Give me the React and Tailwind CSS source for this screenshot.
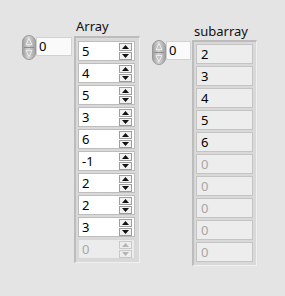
import React from "react";

function IndexSpinner() {
  return (
    <svg width="14" height="25" viewBox="0 0 14 25" className="block">
      <defs>
        <linearGradient id="spg" x1="0" y1="0" x2="1" y2="0">
          <stop offset="0" stopColor="#9c9c9c" />
          <stop offset="0.45" stopColor="#d6d6d6" />
          <stop offset="1" stopColor="#a2a2a2" />
        </linearGradient>
      </defs>
      <rect x="0.5" y="0.5" width="13" height="24" rx="6.5" fill="url(#spg)" stroke="#9a9a9a" />
      <line x1="2" y1="12.5" x2="12" y2="12.5" stroke="#8c8c8c" />
      <path d="M7 3.5 L10 9.5 H4 Z" fill="#c4c4c4" stroke="#f4f4f4" strokeWidth="0.8" />
      <path d="M7 21.5 L10 15.5 H4 Z" fill="#c4c4c4" stroke="#f4f4f4" strokeWidth="0.8" />
    </svg>
  );
}

function IndexBox({ w }) {
  return (
    <div
      className={`${w} h-[19px] bg-[#fafafa] border border-[#d2d2d2] text-[13px] leading-[17px] pl-[2px] text-black`}
    >
      0
    </div>
  );
}

function CellArrows({ disabled }) {
  const c = disabled ? "#b5b5b5" : "#111";
  const b = disabled ? "border-[#c9c9c9] bg-[#ededed]" : "border-[#9d9d9d] bg-[#f2f2f2]";
  return (
    <div className="flex flex-col gap-[1px] mr-[2px]">
      <div className={`w-[13px] h-[8px] border ${b} flex items-center justify-center`}>
        <svg width="7" height="4" viewBox="0 0 7 4">
          <path d="M3.5 0 L7 4 H0 Z" fill={c} />
        </svg>
      </div>
      <div className={`w-[13px] h-[8px] border ${b} flex items-center justify-center`}>
        <svg width="7" height="4" viewBox="0 0 7 4">
          <path d="M0 0 H7 L3.5 4 Z" fill={c} />
        </svg>
      </div>
    </div>
  );
}

function ArrayCell({ v, disabled }) {
  return (
    <div
      className={`h-[20px] flex items-center justify-between border ${
        disabled ? "bg-[#ececec] border-[#d6d6d6] text-[#a9a9a9]" : "bg-white border-[#bdbdbd] text-black"
      }`}
    >
      <span className="pl-[3px] text-[13px] leading-none">{v}</span>
      <CellArrows disabled={disabled} />
    </div>
  );
}

function SubCell({ v, disabled }) {
  return (
    <div
      className={`h-[20px] flex items-center border border-[#c4c4c4] bg-[#ededed] ${
        disabled ? "text-[#a7a7a7]" : "text-black"
      }`}
    >
      <span className="pl-[4px] text-[13px] leading-none">{v}</span>
    </div>
  );
}

export default function App() {
  const arr = ["5", "4", "5", "3", "6", "-1", "2", "2", "3"];
  const sub = ["2", "3", "4", "5", "6"];
  return (
    <div
      className="w-[285px] h-[296px] bg-[#e4e4e4] flex items-start"
      style={{ fontFamily: '"Noto Sans", "Open Sans", sans-serif' }}
    >
      {/* Array group */}
      <div className="flex items-start pl-[22px] pt-[18px]">
        <div className="mt-[17px] flex items-start">
          <IndexSpinner />
          <div className="mt-[2px]">
            <IndexBox w="w-[36px]" />
          </div>
        </div>
        <div className="ml-[2px] flex flex-col">
          <div className="h-[18px] pl-[2px] text-[13px] leading-[16px] text-[#111]">Array</div>
          <div className="w-[66px] bg-[#d9d9d9] border-t-[2px] border-l-[2px] border-[#bcbcbc] border-r border-b border-r-[#f0f0f0] border-b-[#f0f0f0] pt-[3px] pb-[3px] pl-[2px] pr-[4px] flex flex-col gap-[2px]">
            {arr.map((v, i) => (
              <ArrayCell key={i} v={v} />
            ))}
            <ArrayCell v="0" disabled />
          </div>
        </div>
      </div>

      {/* Subarray group */}
      <div className="flex items-start ml-[12px] pt-[23px]">
        <div className="mt-[17px] flex items-start">
          <IndexSpinner />
          <div className="mt-[1px]">
            <IndexBox w="w-[25px]" />
          </div>
        </div>
        <div className="ml-[1px] flex flex-col">
          <div className="h-[17px] pl-[2px] text-[13px] leading-[16px] text-[#111]">subarray</div>
          <div className="w-[65px] bg-[#d9d9d9] border-t-[2px] border-l-[2px] border-[#bcbcbc] border-r border-b border-r-[#f0f0f0] border-b-[#f0f0f0] pt-[2px] pb-[3px] pl-[2px] pr-[3px] flex flex-col gap-[2px]">
            {sub.map((v, i) => (
              <SubCell key={i} v={v} />
            ))}
            {[0, 1, 2, 3, 4].map((i) => (
              <SubCell key={"d" + i} v="0" disabled />
            ))}
          </div>
        </div>
      </div>
    </div>
  );
}
